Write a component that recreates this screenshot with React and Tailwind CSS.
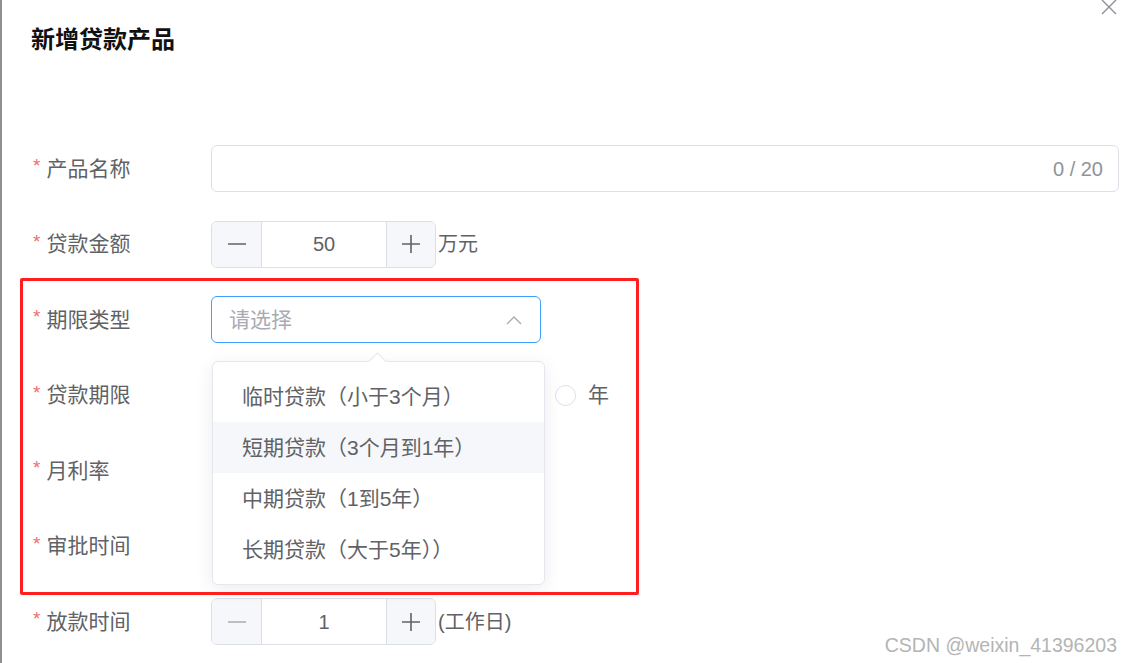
import React from "react";

const font = "font-['Liberation_Sans','Noto_Sans_CJK_SC',sans-serif]";

const options = [
  "临时贷款（小于3个月）",
  "短期贷款（3个月到1年）",
  "中期贷款（1到5年）",
  "长期贷款（大于5年））",
];

// label with the red asterisk
const Label = ({ text }) => (
  <div className="w-[180px] shrink-0 flex items-center text-[21px] text-[#606266]">
    <span className="text-[#f56c6c] text-[19px] ml-[2px] mr-[6px] -mt-[4px]">*</span>
    {text}
  </div>
);

const NumberInput = ({ value, disabled }) => (
  <div className="w-[225px] h-[47px] flex border border-[#dcdfe6] rounded-[6px] overflow-hidden shrink-0">
    <div className="w-[50px] flex items-center justify-center bg-[#f5f7fa] border-r border-[#dcdfe6]">
      <svg width="20" height="20" viewBox="0 0 20 20">
        <line x1="1" y1="10" x2="19" y2="10" stroke={disabled ? "#a8abb2" : "#606266"} strokeWidth="1.6" />
      </svg>
    </div>
    <div className="flex-1 flex items-center justify-center text-[20px] text-[#606266] bg-white">
      {value}
    </div>
    <div className="w-[49px] flex items-center justify-center bg-[#f5f7fa] border-l border-[#dcdfe6]">
      <svg width="20" height="20" viewBox="0 0 20 20">
        <line x1="1" y1="10" x2="19" y2="10" stroke="#606266" strokeWidth="1.6" />
        <line x1="10" y1="1" x2="10" y2="19" stroke="#606266" strokeWidth="1.6" />
      </svg>
    </div>
  </div>
);

const Row = ({ label, children }) => (
  <div className="h-[47px] flex items-center mb-[28.5px]">
    <Label text={label} />
    {children}
  </div>
);

const App = () => {
  return (
    <div className={`relative w-[1131px] h-[663px] bg-white overflow-hidden border-l-2 border-[#8f8f8f] ${font}`}>
      {/* header */}
      <div className="pt-[26px] pl-[29px] text-[24px] leading-[28px] font-bold text-[#111]">
        新增贷款产品
      </div>
      <svg className="absolute left-[1098px] -top-[2px]" width="18" height="18" viewBox="0 0 18 18">
        <line x1="2" y1="2" x2="16" y2="16" stroke="#909399" strokeWidth="1.4" />
        <line x1="16" y1="2" x2="2" y2="16" stroke="#909399" strokeWidth="1.4" />
      </svg>

      {/* form */}
      <div className="mt-[91px] pl-[29px] pr-[12px]">
        <Row label="产品名称">
          <div className="flex-1 h-[47px] border border-[#dcdfe6] rounded-[6px] flex items-center justify-end pr-[15px] text-[20px] text-[#909399]">
            0 / 20
          </div>
        </Row>
        <Row label="贷款金额">
          <NumberInput value="50" />
          <span className="ml-[2px] text-[20px] text-[#606266]">万元</span>
        </Row>
        <Row label="期限类型">
          <div className="w-[330px] h-[47px] border-[1.5px] border-[#409eff] rounded-[6px] flex items-center justify-between pl-[17px] pr-[18px]">
            <span className="text-[21px] text-[#a8abb2]">请选择</span>
            <svg width="16" height="10" viewBox="0 0 16 10">
              <polyline points="1,9 8,2 15,9" fill="none" stroke="#a8abb2" strokeWidth="1.4" />
            </svg>
          </div>
        </Row>
        <Row label="贷款期限">
          {/* the rest of the radio group sits under the open dropdown */}
          <div className="w-[344px] shrink-0" />
          <div className="flex items-center gap-[12px]">
            <span className="w-[21px] h-[21px] rounded-full border border-[#dcdfe6]" />
            <span className="text-[21px] text-[#606266]">年</span>
          </div>
        </Row>
        <Row label="月利率" />
        <Row label="审批时间" />
        <Row label="放款时间">
          <NumberInput value="1" disabled />
          <span className="ml-[2px] text-[20px] text-[#606266]">(工作日)</span>
        </Row>
      </div>

      {/* select dropdown */}
      <div className="absolute left-[210px] top-[361px] w-[333px] py-[9px] bg-white border border-[#e4e7ed] rounded-[6px] shadow-[0_4px_18px_rgba(0,0,0,0.08)]">
        <span className="absolute left-[158px] -top-[7px] w-[13px] h-[13px] rotate-45 bg-white border-l border-t border-[#e4e7ed]" />
        {options.map((o, i) => (
          <div
            key={i}
            className={`h-[51px] flex items-center pl-[29px] text-[21px] text-[#606266] ${i === 1 ? "bg-[#f5f7fa]" : ""}`}
          >
            {o}
          </div>
        ))}
      </div>

      {/* red annotation box */}
      <div className="absolute left-[18px] top-[278px] w-[619px] h-[317px] border-[3px] border-[#ff1f1f] rounded-[2px] pointer-events-none" />

      {/* watermark */}
      <div className="absolute right-[14px] top-[631px] text-[19.5px] text-[#b4b4b4] [text-shadow:0_0_1px_#fff]">
        CSDN @weixin_41396203
      </div>
    </div>
  );
};

export default App;
